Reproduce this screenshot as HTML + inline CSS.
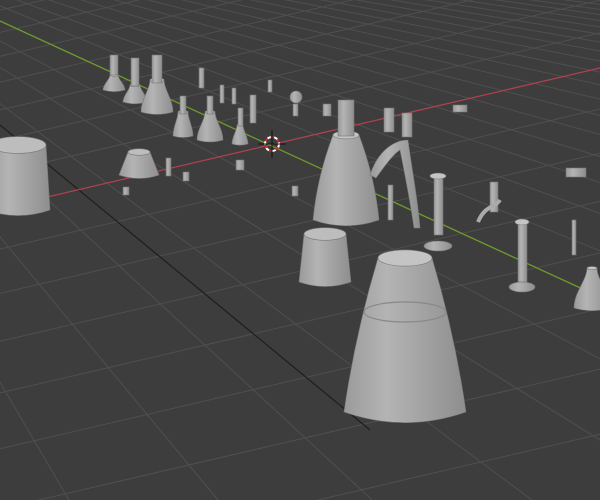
<!DOCTYPE html>
<html><head><meta charset="utf-8"><style>
html,body{margin:0;padding:0;background:#3d3d3d;overflow:hidden;width:600px;height:500px}
svg{display:block;overflow:hidden}
</style></head><body>
<svg id="s" width="600" height="500" viewBox="0 0 600 500" xmlns="http://www.w3.org/2000/svg">
<defs>
<linearGradient id="g" x1="0" x2="1" y1="0" y2="0">
<stop offset="0" stop-color="#9a9a9a"/><stop offset="0.35" stop-color="#b4b4b4"/><stop offset="1" stop-color="#8e8e8e"/>
</linearGradient>
</defs>
<rect width="600" height="500" fill="#3d3d3d"/>
<g id="grid" stroke="#4f4f4f" stroke-width="1"></g>
<line x1="0" y1="125" x2="370" y2="430" stroke="#1e1e1e" stroke-width="1.2"/>
<line x1="0" y1="208" x2="600" y2="68" stroke="#b04050" stroke-width="1.3"/>
<line x1="0" y1="21" x2="600" y2="297" stroke="#6d9a2a" stroke-width="1.3"/>
<g id="obj" fill="url(#g)" stroke="#777" stroke-width="0.6"></g>
<g>
<circle cx="272" cy="144" r="7" fill="none" stroke="#fff" stroke-width="2" stroke-dasharray="4 3"/>
<circle cx="272" cy="144" r="7" fill="none" stroke="#d22" stroke-width="2" stroke-dasharray="3 4" stroke-dashoffset="3.5"/>
<line x1="272" y1="130" x2="272" y2="158" stroke="#111" stroke-width="1"/>
<line x1="258" y1="144" x2="286" y2="144" stroke="#111" stroke-width="1"/>
</g>
</svg>
<script>
var NS="http://www.w3.org/2000/svg";
var grid=document.getElementById('grid'),obj=document.getElementById('obj');
function L(x1,y1,x2,y2){var l=document.createElementNS(NS,'line');l.setAttribute('x1',x1);l.setAttribute('y1',y1);l.setAttribute('x2',x2);l.setAttribute('y2',y2);grid.appendChild(l);}
var c=208,st=38;
for(var k=0;k<16;k++){L(0,c,600,c-140);st*=1.08;c+=st;}
c=208;st=38;for(k=0;k<20;k++){st/=1.08;c-=st;L(0,c,600,c-140);}
var vx=-289,vy=-112;
function ray(px,py){var dx=px-vx,dy=py-vy;var t=(500-vy)/dy;L(vx,vy,vx+dx*t,vy+dy*t);}
var x=270,s=48;
for(k=0;k<25;k++){ray(x,208-0.233*x);s*=0.94;x+=s;}
x=270;s=48;for(k=0;k<25;k++){s/=0.94;x-=s;ray(x,208-0.233*x);}
function el(tag,a){var e=document.createElementNS(NS,tag);for(var k in a)e.setAttribute(k,a[k]);obj.appendChild(e);return e;}
function noz(x,yt,rt,yb,rb){
 el('path',{d:'M'+(x-rt)+','+yt+' C'+(x-rt)+','+(yt+(yb-yt)*0.3)+' '+(x-rb)+','+(yb-(yb-yt)*0.4)+' '+(x-rb)+','+yb+' Q'+x+','+(yb+rb*0.3)+' '+(x+rb)+','+yb+' C'+(x+rb)+','+(yb-(yb-yt)*0.4)+' '+(x+rt)+','+(yt+(yb-yt)*0.3)+' '+(x+rt)+','+yt+' Z'});
 el('ellipse',{cx:x,cy:yt,rx:rt,ry:rt*0.3,fill:'#c4c4c4'});
}
function cone(x,yt,rt,yb,rb){
 el('path',{d:'M'+(x-rt)+','+yt+' L'+(x-rb)+','+yb+' Q'+x+','+(yb+rb*0.35)+' '+(x+rb)+','+yb+' L'+(x+rt)+','+yt+' Z'});
 el('ellipse',{cx:x,cy:yt,rx:rt,ry:rt*0.3,fill:'#bdbdbd'});
}
function bcone(x,yt,rt,yb,rb){
 var mr=(rt+rb)/2+6, my=(yt+yb)/2;
 el('path',{d:'M'+(x-rt)+','+yt+' Q'+(x-mr)+','+my+' '+(x-rb)+','+yb+' Q'+x+','+(yb+rb*0.35)+' '+(x+rb)+','+yb+' Q'+(x+mr)+','+my+' '+(x+rt)+','+yt+' Z'});
 el('ellipse',{cx:x,cy:yt,rx:rt,ry:rt*0.3,fill:'#c4c4c4'});
}
function rect(x,y,w,h){el('rect',{x:x,y:y,width:w,height:h});}
cone(18,145,28,210,32);
noz(114,75,4,90,11);rect(110,55,8,20);
noz(135,85,5,102,12);rect(131,58,8,28);
noz(157,80,7,112,16);rect(152,55,10,28);
noz(183,112,5,136,10);rect(180,96,6,18);
noz(210,112,5,140,13);rect(207,96,6,18);
cone(139,152,11,175,20);
noz(240,125,3,144,8);rect(238,108,5,18);
rect(199,68,5,20);rect(220,85,4,18);rect(232,88,4,16);rect(250,95,6,28);rect(268,80,4,12);
el('circle',{cx:296,cy:97,r:6});rect(293,104,5,12);rect(323,104,8,12);
rect(166,158,5,18);rect(183,172,6,9);rect(123,187,6,8);rect(236,160,8,10);
bcone(346,135,13,220,33);rect(338,100,16,36);
cone(325,234,21,282,26);
el('path',{d:'M370,175 C378,150 395,140 408,140 C412,170 418,200 420,228 L414,228 C410,200 404,170 400,150 C392,155 382,170 376,178 Z'});
rect(384,108,10,24);rect(402,113,10,24);
rect(388,185,5,35);
bcone(405,258,27,412,61);
el('ellipse',{cx:405,cy:312,rx:41,ry:10,fill:'none',stroke:'#888','stroke-width':1.2});
rect(434,175,9,60);el('ellipse',{cx:438,cy:246,rx:14,ry:5});el('ellipse',{cx:438,cy:176,rx:8,ry:3,fill:'#c4c4c4'});
rect(490,182,8,30);el('path',{d:'M478,222 C485,205 495,208 500,200',fill:'none',stroke:'#aaa','stroke-width':4});
rect(518,222,9,60);el('ellipse',{cx:522,cy:287,rx:13,ry:5});el('ellipse',{cx:522,cy:222,rx:7,ry:3,fill:'#c4c4c4'});
rect(572,220,4,35);
noz(592,268,5,308,18);
rect(453,105,14,7);rect(566,168,20,9);rect(292,186,6,10);
</script>
</body></html>
